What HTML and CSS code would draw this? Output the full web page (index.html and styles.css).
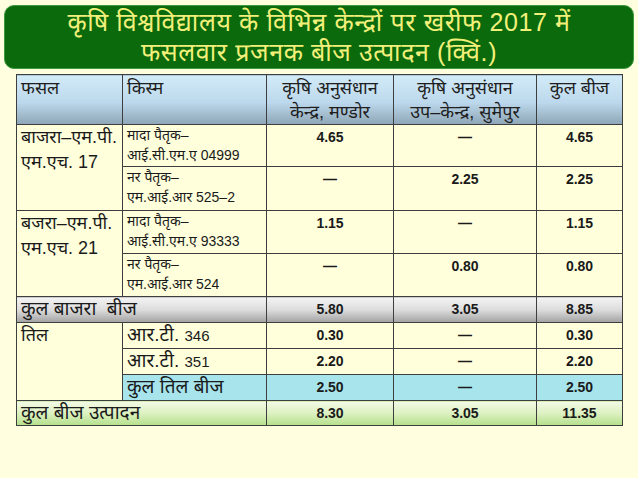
FILE: index.html
```html
<!DOCTYPE html>
<html lang="hi">
<head>
<meta charset="utf-8">
<link rel="stylesheet" href="styles.css">
</head>
<body>
<div class="page">
  <div class="banner">
    <div class="title">कृषि विश्वविद्यालय के विभिन्न केन्द्रों पर खरीफ 2017 में</div>
    <div class="title">फसलवार प्रजनक बीज उत्पादन (क्विं.)</div>
  </div>
  <table class="seed">
    <colgroup>
      <col class="c1"><col class="c2"><col class="c3"><col class="c4"><col class="c5">
    </colgroup>
    <thead>
      <tr class="head">
        <th class="l">फसल</th>
        <th class="l">किस्म</th>
        <th>कृषि अनुसंधान<br>केन्द्र, मण्डोर</th>
        <th>कृषि अनुसंधान<br>उप–केन्द्र, सुमेपुर</th>
        <th>कुल बीज</th>
      </tr>
    </thead>
    <tbody>
      <tr class="tall">
        <td class="crop" rowspan="2">बाजरा–एम.पी.<br>एम.एच. 17</td>
        <td class="var">मादा पैतृक–<br>आई.सी.एम.ए 04999</td>
        <td class="num">4.65</td><td class="num">—</td><td class="num">4.65</td>
      </tr>
      <tr class="tall2">
        <td class="var">नर पैतृक–<br>एम.आई.आर 525–2</td>
        <td class="num">—</td><td class="num">2.25</td><td class="num">2.25</td>
      </tr>
      <tr class="tall3">
        <td class="crop" rowspan="2">बजरा–एम.पी.<br>एम.एच. 21</td>
        <td class="var">मादा पैतृक–<br>आई.सी.एम.ए 93333</td>
        <td class="num">1.15</td><td class="num">—</td><td class="num">1.15</td>
      </tr>
      <tr class="tall3">
        <td class="var">नर पैतृक–<br>एम.आई.आर 524</td>
        <td class="num">—</td><td class="num">0.80</td><td class="num">0.80</td>
      </tr>
      <tr class="short2 total-gray">
        <td class="big" colspan="2">कुल बाजरा &nbsp;बीज</td>
        <td class="num">5.80</td><td class="num">3.05</td><td class="num">8.85</td>
      </tr>
      <tr class="short">
        <td class="crop" rowspan="3">तिल</td>
        <td class="big">आर.टी. <span class="n">346</span></td>
        <td class="num">0.30</td><td class="num">—</td><td class="num">0.30</td>
      </tr>
      <tr class="short">
        <td class="big">आर.टी. <span class="n">351</span></td>
        <td class="num">2.20</td><td class="num">—</td><td class="num">2.20</td>
      </tr>
      <tr class="short2 total-cyan">
        <td class="big">कुल तिल बीज</td>
        <td class="num">2.50</td><td class="num">—</td><td class="num">2.50</td>
      </tr>
      <tr class="short total-green">
        <td class="big" colspan="2">कुल बीज उत्पादन</td>
        <td class="num">8.30</td><td class="num">3.05</td><td class="num">11.35</td>
      </tr>
    </tbody>
  </table>
</div>
</body>
</html>
```
FILE: styles.css
```css
html, body {
  margin: 0;
  padding: 0;
  background: #ffffe0;
}
body {
  font-family: "Liberation Sans", "Noto Sans Devanagari", "Lohit Devanagari", sans-serif;
  color: #1a1a1a;
}
.page {
  width: 638px;
  height: 478px;
  padding: 5px 4px 0 4px;
  box-sizing: border-box;
}
.banner {
  height: 64px;
  background: #0b6a0b;
  border: 1px solid #3d9a3d;
  border-radius: 10px;
  box-sizing: border-box;
  display: flex;
  flex-direction: column;
  justify-content: center;
  align-items: center;
  color: #f2f07a;
}
.title {
  font-size: 25px;
  line-height: 30px;
  letter-spacing: 0.6px;
}
.seed {
  margin: 5px 0 0 12px;
  border-collapse: collapse;
  table-layout: fixed;
  width: 606px;
  background: #ffffdc;
}
.c1 { width: 106px; }
.c2 { width: 144px; }
.c3 { width: 127px; }
.c4 { width: 143px; }
.c5 { width: 86px; }
.seed th, .seed td {
  border: 1px solid #3e3e3e;
  vertical-align: top;
  padding: 0 4px;
  overflow: hidden;
  white-space: nowrap;
}
.head { height: 50px; }
.tall { height: 42px; }
.tall2 { height: 44px; }
.tall3 { height: 43px; }
.short { height: 25px; }
.short2 { height: 26px; }
.head th {
  font-weight: normal;
  font-size: 18px;
  line-height: 24px;
  padding-top: 1px;
  text-align: center;
  background: linear-gradient(to bottom, #d2ebf8 0%, #bcd8ec 55%, #8ea6b6 100%);
  color: #1e1e1e;
}
.head th.l { text-align: left; }
.crop {
  font-size: 18px;
  line-height: 25px;
  padding-top: 0;
}
.var {
  font-size: 14px;
  line-height: 20px;
  padding-top: 1px;
}
.big {
  font-size: 19px;
  line-height: 24px;
}
.n { font-size: 15px; }
.num {
  text-align: center;
  font-size: 14px;
  font-weight: bold;
  line-height: 24px;
  padding-top: 1px;
}
.total-gray td {
  background: linear-gradient(to bottom, #f4f4f4 0%, #dcdcdc 50%, #a2a2a2 100%);
}
.total-cyan td { background: #a7e4ec; }
.total-green td {
  background: linear-gradient(to bottom, #f4fae6 0%, #dcf0c0 50%, #b4e08c 100%);
}
```
